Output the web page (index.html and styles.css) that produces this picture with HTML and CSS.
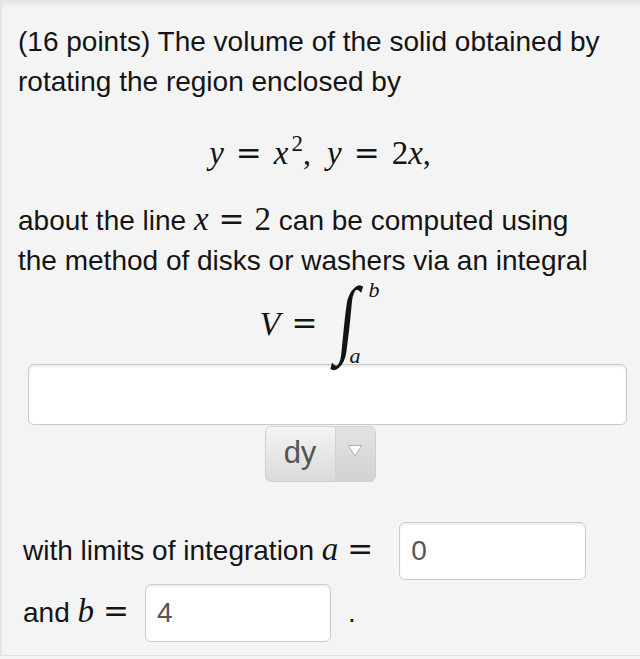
FILE: index.html
```html
<!DOCTYPE html>
<html>
<head>
<meta charset="utf-8">
<link rel="stylesheet" href="styles.css">
</head>
<body>
<div class="problem">
  <p class="text">(16 points) The volume of the solid obtained by rotating the region enclosed by</p>
  <div class="display"><span class="m">y</span><span class="op">=</span><span class="m">x</span><sup class="sup">2</sup><span class="punct">,</span><span class="m">y</span><span class="op">=</span><span class="num">2</span><span class="m">x</span><span class="punct">,</span></div>
  <p class="text"><span>about the line</span> <span class="m">x</span><span class="op">=</span><span class="num">2</span> <span>can be computed using</span><br><span>the method of disks or washers via an integral</span></p>
  <div class="integral">
    <span class="m big">V</span><span class="op">=</span>
    <span class="intwrap"><span class="intsign">∫</span><span class="lim up">b</span><span class="lim low">a</span></span>
  </div>
  <div class="answer"></div>
  <div class="selrow">
    <div class="select"><span class="selval">dy</span><span class="selarrow"><svg width="16" height="14" viewBox="0 0 16 14"><path d="M1.5 1.5 H14.5 L8 12.5 Z" fill="#fff" stroke="#b0b0b0" stroke-width="1"/></svg></span></div>
  </div>
  <div class="row row-a">
    <span class="label">with limits of integration <span class="m">a</span><span class="op">=</span></span>
    <div class="box box-a">0</div>
  </div>
  <div class="row row-b">
    <span class="label">and <span class="m">b</span><span class="op">=</span></span>
    <div class="box box-b">4</div>
    <span class="dot">.</span>
  </div>
</div>
</body>
</html>
```

FILE: styles.css
```css
html, body {
  margin: 0;
  padding: 0;
  background: #f4f4f4;
}
body {
  width: 640px;
  height: 659px;
  overflow: hidden;
}
.problem {
  box-sizing: border-box;
  height: 656px;
  padding: 22px 0 0 16px;
  border-left: 2px solid #e4e4e4;
  border-bottom: 1px solid #e2e2e2;
  box-shadow: inset 0 7px 6px -5px rgba(0,0,0,0.10);
  font-family: "Liberation Sans", Arial, sans-serif;
  font-size: 28px;
  line-height: 40px;
  color: #141414;
}
.text {
  margin: 0;
  width: 586px;
}
.m {
  font-family: "Liberation Serif", "Times New Roman", serif;
  font-style: italic;
  font-size: 33px;
  line-height: 1;
}
.num {
  font-family: "Liberation Serif", "Times New Roman", serif;
  font-size: 33px;
  line-height: 1;
}
.op {
  font-family: "DejaVu Serif", serif;
  font-size: 31px;
  line-height: 1;
  margin: 0 10px;
}
.punct {
  font-family: "Liberation Serif", serif;
  font-size: 32px;
  margin-right: 16px;
}
.display .punct:last-child {
  margin-right: 0;
}
.sup {
  font-family: "Liberation Serif", serif;
  font-size: 23px;
  vertical-align: 13px;
  line-height: 0;
  margin-left: 3px;
}
.display {
  margin-top: 31px;
  margin-bottom: 28px;
  height: 40px;
  text-align: center;
  padding-right: 18px;
}
.display .op { margin: 0 12px; }
.integral {
  display: flex;
  align-items: center;
  justify-content: center;
  height: 81px;
  margin-top: 2px;
  padding-right: 13px;
}
.integral .op { margin: 0 20px 0 11px; }
.big { font-size: 34px; }
.intwrap {
  position: relative;
  display: inline-block;
  width: 48px;
  height: 81px;
}
.intsign {
  position: absolute;
  left: 2px;
  top: -6px;
  font-family: "Liberation Serif", serif;
  font-size: 64px;
  line-height: 84px;
  transform: scaleY(1.35) skewX(-8deg);
  transform-origin: center;
}
.lim {
  position: absolute;
  font-family: "Liberation Serif", serif;
  font-style: italic;
  font-size: 22px;
  line-height: 22px;
}
.lim.up { left: 31px; top: -4px; }
.lim.low { left: 12px; top: 62px; }
.answer {
  box-sizing: border-box;
  margin-left: 10px;
  width: 599px;
  height: 61px;
  background: #fff;
  border: 1px solid #c9c9c9;
  border-radius: 6px;
  box-shadow: inset 0 2px 2px rgba(0,0,0,0.08);
}
.selrow {
  display: flex;
  justify-content: center;
  padding-right: 18px;
  margin-top: 1px;
}
.select {
  display: flex;
  box-sizing: border-box;
  width: 111px;
  height: 56px;
  border: 1px solid #cfcfcf;
  border-radius: 6px;
  overflow: hidden;
  background: linear-gradient(#f4f4f4, #dadada);
}
.selval {
  width: 69px;
  text-align: center;
  line-height: 52px;
  font-size: 31px;
  color: #555;
}
.selarrow {
  flex: 1;
  display: flex;
  align-items: center;
  justify-content: center;
  padding-bottom: 6px;
  background: linear-gradient(#e3e3e3, #d2d2d2);
  border-left: 1px solid #d2d2d2;
}
.row {
  display: flex;
  align-items: center;
}
.row-a { margin-top: 40px; }
.row-b { margin-top: 4px; }
.label {
  white-space: nowrap;
  padding-left: 5px;
}
.row .op { margin: 0 9px; }
.box {
  box-sizing: border-box;
  width: 187px;
  height: 58px;
  background: #fff;
  border: 1px solid #cccccc;
  border-radius: 6px;
  box-shadow: inset 0 2px 2px rgba(0,0,0,0.07);
  color: #555;
  font-size: 28px;
  line-height: 56px;
  padding-left: 11px;
  margin-left: 11px;
}
.box-a { margin-left: 17px; }
.box-b { width: 186px; margin-left: 7px; }
.dot {
  margin-left: 17px;
  font-size: 28px;
}
```
